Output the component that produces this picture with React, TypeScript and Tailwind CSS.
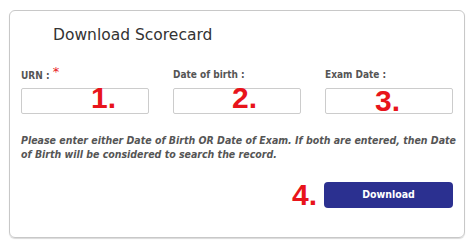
import React from "react";

export default function App() {
  const num = "absolute font-bold text-[#e8141b] leading-none text-[30px]";
  const arial = { fontFamily: '"Liberation Sans", Arial, sans-serif' };
  const cond = { fontFamily: '"DejaVu Sans Condensed", "DejaVu Sans", sans-serif' };
  const label = "text-[10px] font-bold text-[#555] leading-[14px] h-[14px]";
  const input = "mt-[6px] w-[128px] h-[26px] border border-[#ccc] rounded-[2px]";
  return (
    <div className="w-[474px] h-[245px] bg-white relative" style={{ fontFamily: '"DejaVu Sans", Verdana, sans-serif' }}>
      <div className="absolute left-[9px] top-[10px] w-[456px] h-[228px] border border-[#c8c8c8] rounded-[6px] shadow-[0_1px_1px_rgba(0,0,0,0.15)]">
        <div className="pl-[43px] pt-[14px] text-[15.5px] text-[#333] leading-[20px]">Download Scorecard</div>
        <div className="flex gap-[24px] pl-[11px] pt-[23px]" style={cond}>
          <div className="flex flex-col">
            <div className={label}>
              URN :{" "}
              <span className="text-[#e8141b] text-[13px] relative top-[-3px] font-normal" style={{ fontFamily: '"DejaVu Sans", sans-serif' }}>*</span>
            </div>
            <div className={input}></div>
          </div>
          <div className="flex flex-col">
            <div className={label}>Date of birth :</div>
            <div className={input}></div>
          </div>
          <div className="flex flex-col">
            <div className={label}>Exam Date :</div>
            <div className={input}></div>
          </div>
        </div>
        <p className="pl-[11px] pr-[8px] pt-[19px] text-[10.5px] font-bold italic text-[#555] leading-[14px]" style={cond}>
          Please enter either Date of Birth OR Date of Exam. If both are entered, then Date of Birth will be considered to search the record.
        </p>
        <div className="flex justify-end pr-[11px] pt-[21px]">
          <button className="w-[129px] h-[26px] bg-[#2b3090] rounded-[4px] text-white text-[10.5px] font-bold" style={cond}>Download</button>
        </div>
      </div>
      <span className={num + " left-[91px] top-[83px]"} style={arial}>1.</span>
      <span className={num + " left-[232px] top-[83px]"} style={arial}>2.</span>
      <span className={num + " left-[375px] top-[86px]"} style={arial}>3.</span>
      <span className={num + " left-[292px] top-[180px]"} style={arial}>4.</span>
    </div>
  );
}
